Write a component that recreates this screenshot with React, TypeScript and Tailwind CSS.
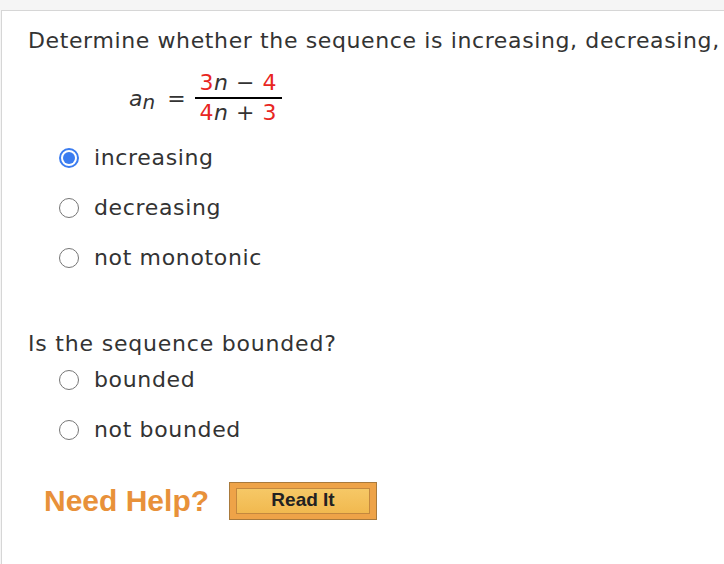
import React from "react";

const font = { fontFamily: '"DejaVu Sans", Verdana, sans-serif' };
const arial = { fontFamily: '"Liberation Sans", Arial, sans-serif' };

function Radio({ checked }: { checked?: boolean }) {
  if (checked) {
    return (
      <span className="flex h-[20px] w-[20px] shrink-0 items-center justify-center rounded-full border-[2px] border-[#3b7cf0] bg-white">
        <span className="h-[12px] w-[12px] rounded-full bg-[#3b7cf0]" />
      </span>
    );
  }
  return <span className="h-[20px] w-[20px] shrink-0 rounded-full border-[1.5px] border-[#767676] bg-white" />;
}

function Option({ label, checked }: { label: string; checked?: boolean }) {
  return (
    <div className="flex h-[50px] items-center gap-[15px] pl-[57px]">
      <Radio checked={checked} />
      <span className="text-[22px] tracking-[0.65px] text-[#333]">{label}</span>
    </div>
  );
}

export default function App() {
  return (
    <div className="min-h-[564px] bg-[#f5f5f5] pt-[10px]" style={font}>
      <div className="ml-[1px] min-h-[554px] border-l border-t border-[#d6d6d6] bg-white">
        <div className="whitespace-nowrap pl-[26px] pt-[15px] text-[22px] leading-[30px] tracking-[0.62px] text-[#333]">
          Determine whether the sequence is increasing, decreasing,
        </div>
        <div className="flex items-center pl-[127px] pt-[14px] text-[22px] text-[#333]">
          <span className="italic">
            a<sub className="relative top-[3px] text-[20px]">n</sub>
          </span>
          <span className="ml-[12px] mr-[9px]">=</span>
          <span className="flex flex-col items-center">
            <span className="px-[5px] leading-[26px] tracking-[0.5px]">
              <span className="text-[#e8261f]">3</span>
              <span className="italic">n</span>
              <span> − </span>
              <span className="text-[#e8261f]">4</span>
            </span>
            <span className="mt-[1px] h-[1.5px] w-full bg-black" />
            <span className="px-[5px] leading-[28px] tracking-[0.5px]">
              <span className="text-[#e8261f]">4</span>
              <span className="italic">n</span>
              <span> + </span>
              <span className="text-[#e8261f]">3</span>
            </span>
          </span>
        </div>
        <div className="pt-[6px]">
          <Option label="increasing" checked />
          <Option label="decreasing" />
          <Option label="not monotonic" />
        </div>
        <div className="whitespace-nowrap pl-[26px] pt-[46px] text-[22px] leading-[30px] tracking-[0.8px] text-[#333]">
          Is the sequence bounded?
        </div>
        <div className="-mt-[4px]">
          <Option label="bounded" />
          <Option label="not bounded" />
        </div>
        <div className="flex items-center gap-[20px] pl-[42px] pt-[27px]">
          <span className="text-[30px] font-bold leading-[36px] text-[#e8913a]" style={arial}>
            Need Help?
          </span>
          <span className="flex h-[38px] w-[148px] items-center justify-center border border-[#a97a3c] bg-[#eea348] px-[6px] py-[5px]">
            <span
              className="flex h-full w-full items-center justify-center border border-[#c4883e] bg-gradient-to-b from-[#f6c866] to-[#f1b94f] text-[19px] font-bold text-[#222]"
              style={arial}
            >
              Read It
            </span>
          </span>
        </div>
      </div>
    </div>
  );
}
